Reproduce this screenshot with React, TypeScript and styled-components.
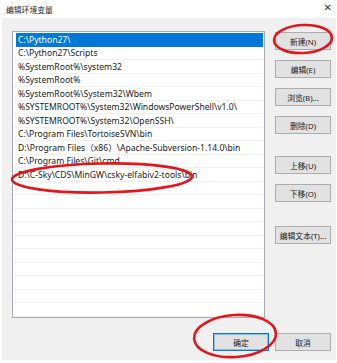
import React from "react";
import styled, { createGlobalStyle } from "styled-components";

const Global = createGlobalStyle`
  html, body { margin: 0; padding: 0; background: #ffffff; }
  body { font-family: "Noto Sans", "Noto Sans CJK SC", sans-serif; }
  * { box-sizing: border-box; }
`;

const Window = styled.div`
  position: relative;
  width: 337px;
  height: 363px;
  background: #ffffff;
  display: flex;
  flex-direction: column;
  padding: 0 1px 3px 2px;
  overflow: hidden;
`;

const TitleBar = styled.div`
  height: 18px;
  display: flex;
  align-items: center;
  justify-content: space-between;
  padding: 0 4px 0 4px;
`;

const Title = styled.span`
  font-family: "Noto Sans CJK SC", sans-serif;
  font-size: 7.8px;
  color: #1f1f1f;
  margin-top: 1px;
`;

const Close = styled.span`
  font-family: "DejaVu Sans", sans-serif;
  font-size: 10px;
  color: #333;
  line-height: 1;
  margin-top: -2px;
`;

const Panel = styled.div`
  flex: 1;
  background: #f0f0f0;
  padding: 13px 5px 0 10px;
  display: flex;
  flex-direction: column;
  position: relative;
`;

const Main = styled.div`
  display: flex;
  gap: 10px;
`;

const List = styled.div`
  width: 254px;
  height: 287px;
  background: #ffffff;
  border: 1px solid #a9abb0;
  padding: 1px 1px 0 3px;
  overflow: hidden;
`;

const Row = styled.div<{ $selected?: boolean }>`
  height: 13.5px;
  display: flex;
  align-items: center;
  font-size: 8.6px;
  white-space: nowrap;
  color: ${(p) => (p.$selected ? "#ffffff" : "#1a1a1a")};
  background: ${(p) => (p.$selected ? "#0078d7" : "transparent")};
  box-shadow: ${(p) => (p.$selected ? "none" : "inset 0 -1px 0 #f0f0f0")};
  margin-left: ${(p) => (p.$selected ? "0" : "-3px")};
  padding-left: ${(p) => (p.$selected ? "2px" : "5px")};
`;

const Side = styled.div`
  display: flex;
  flex-direction: column;
  padding-top: 1px;
`;

const Btn = styled.button<{ $gap?: number; $default?: boolean }>`
  width: 56px;
  height: 18px;
  margin: 0;
  margin-top: ${(p) => p.$gap ?? 0}px;
  padding: 0;
  background: #e1e1e1;
  border: 1px solid ${(p) => (p.$default ? "#0078d7" : "#adadad")};
  box-shadow: ${(p) => (p.$default ? "inset 0 0 0 1px rgba(0,120,215,0.35)" : "none")};
  font-family: "Noto Sans", "Noto Sans CJK SC", sans-serif;
  font-size: 7.8px;
  color: #1a1a1a;
  display: flex;
  align-items: center;
  justify-content: center;
  white-space: nowrap;
`;

const Footer = styled.div`
  display: flex;
  justify-content: flex-end;
  gap: 6px;
  margin-top: 15px;
`;

const Grip = styled.div`
  position: absolute;
  right: 1px;
  bottom: 1px;
  width: 4px;
  height: 4px;
  background: radial-gradient(circle, #b0b0b0 0.6px, transparent 0.7px) 0 0 / 2px 2px;
`;

const Marks = styled.svg`
  position: absolute;
  left: 0;
  top: 0;
  pointer-events: none;
`;

const paths = [
  "C:\\Python27\\",
  "C:\\Python27\\Scripts",
  "%SystemRoot%\\system32",
  "%SystemRoot%",
  "%SystemRoot%\\System32\\Wbem",
  "%SYSTEMROOT%\\System32\\WindowsPowerShell\\v1.0\\",
  "%SYSTEMROOT%\\System32\\OpenSSH\\",
  "C:\\Program Files\\TortoiseSVN\\bin",
  "D:\\Program Files（x86）\\Apache-Subversion-1.14.0\\bin",
  "C:\\Program Files\\Git\\cmd",
  "D:\\C-Sky\\CDS\\MinGW\\csky-elfabiv2-tools\\bin",
];

export default function App() {
  const rows = [...paths, ...Array(21 - paths.length).fill("")];
  return (
    <>
      <Global />
      <Window>
        <TitleBar>
          <Title>编辑环境变量</Title>
          <Close>✕</Close>
        </TitleBar>
        <Panel>
          <Main>
            <List>
              {rows.map((t, i) => (
                <Row key={i} $selected={i === 0}>
                  {t}
                </Row>
              ))}
            </List>
            <Side>
              <Btn>新建(N)</Btn>
              <Btn $gap={10}>编辑(E)</Btn>
              <Btn $gap={10}>浏览(B)...</Btn>
              <Btn $gap={10}>删除(D)</Btn>
              <Btn $gap={22}>上移(U)</Btn>
              <Btn $gap={10}>下移(O)</Btn>
              <Btn $gap={24}>编辑文本(T)...</Btn>
            </Side>
          </Main>
          <Footer>
            <Btn $default>确定</Btn>
            <Btn>取消</Btn>
          </Footer>
          <Grip />
        </Panel>
        <Marks width="337" height="363" viewBox="0 0 337 363">
          <g fill="none" stroke="#e2161f" strokeWidth="2.6">
            <ellipse cx="303" cy="39" rx="29" ry="14" transform="rotate(-3 303 39)" />
            <ellipse cx="102" cy="178" rx="90" ry="14.5" transform="rotate(-1 102 178)" />
            <ellipse cx="235" cy="336" rx="41" ry="21" transform="rotate(-4 235 336)" />
          </g>
        </Marks>
      </Window>
    </>
  );
}
